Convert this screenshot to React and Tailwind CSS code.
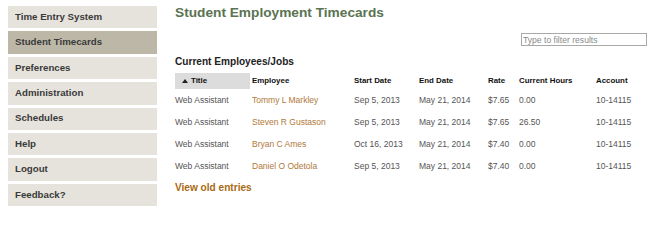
import React from "react";

const navItems = [
  "Time Entry System",
  "Student Timecards",
  "Preferences",
  "Administration",
  "Schedules",
  "Help",
  "Logout",
  "Feedback?",
];

const rows = [
  { title: "Web Assistant", name: "Tommy L Markley", start: "Sep 5, 2013", end: "May 21, 2014", rate: "$7.65", hours: "0.00", account: "10-14115" },
  { title: "Web Assistant", name: "Steven R Gustason", start: "Sep 5, 2013", end: "May 21, 2014", rate: "$7.65", hours: "26.50", account: "10-14115" },
  { title: "Web Assistant", name: "Bryan C Ames", start: "Oct 16, 2013", end: "May 21, 2014", rate: "$7.40", hours: "0.00", account: "10-14115" },
  { title: "Web Assistant", name: "Daniel O Odetola", start: "Sep 5, 2013", end: "May 21, 2014", rate: "$7.40", hours: "0.00", account: "10-14115" },
];

const cols = "grid grid-cols-[77px_102px_65px_69px_31px_77px_50px]";

export default function App() {
  return (
    <div className="w-[659px] h-[225px] bg-white flex font-['Liberation_Sans',Arial,sans-serif] overflow-hidden">
      {/* Sidebar */}
      <div className="w-[157px] shrink-0 pl-[8px] pt-[6px] flex flex-col gap-[3px]">
        {navItems.map((item) => (
          <div
            key={item}
            className={`h-[22.4px] flex items-center pl-[7px] text-[9.7px] font-bold text-[#3a3a3a] ${
              item === "Student Timecards" ? "bg-[#bdb7a7]" : "bg-[#e6e3dc]"
            }`}
          >
            {item}
          </div>
        ))}
      </div>

      {/* Main */}
      <div className="w-[490px] shrink-0 pl-[18px]">
        <h1 className="pt-[5px] text-[13.7px] leading-[16px] font-bold text-[#5a7352]">
          Student Employment Timecards
        </h1>

        <div className="flex justify-end mt-[12px]">
          <div className="w-[126px] h-[13px] shrink-0 border border-[#a9a9a9] flex">
            <input
              placeholder="Type to filter results"
              className="w-full min-w-0 h-full px-[1px] text-[8.6px] leading-[11px] text-[#333] placeholder:text-[#8a8a8a] outline-none"
            />
          </div>
        </div>

        <h2 className="mt-[10px] text-[10.1px] leading-[12px] font-bold text-[#222]">
          Current Employees/Jobs
        </h2>

        {/* Table */}
        <div className="mt-[5px]">
          <div className={`${cols} h-[16px] items-center text-[7.9px] font-bold text-[#111]`}>
            <div className="h-full mr-[2px] bg-[#dcdcdc] flex items-center pl-[7px] gap-[2px]">
              <svg width="6" height="4" viewBox="0 0 6 4" className="shrink-0">
                <path d="M3 0 L6 4 L0 4 Z" fill="#222" />
              </svg>
              <span className="ml-[1px]">Title</span>
            </div>
            <div>Employee</div>
            <div>Start Date</div>
            <div>End Date</div>
            <div>Rate</div>
            <div>Current Hours</div>
            <div>Account</div>
          </div>

          {rows.map((r) => (
            <div key={r.name} className={`${cols} h-[22.2px] items-center text-[8.5px] text-[#555]`}>
              <div>{r.title}</div>
              <div className="text-[#b07838]">{r.name}</div>
              <div>{r.start}</div>
              <div>{r.end}</div>
              <div>{r.rate}</div>
              <div>{r.hours}</div>
              <div>{r.account}</div>
            </div>
          ))}
        </div>

        <div className="mt-[4px] text-[10.1px] leading-[12px] font-bold text-[#a86a12]">
          View old entries
        </div>
      </div>
    </div>
  );
}
